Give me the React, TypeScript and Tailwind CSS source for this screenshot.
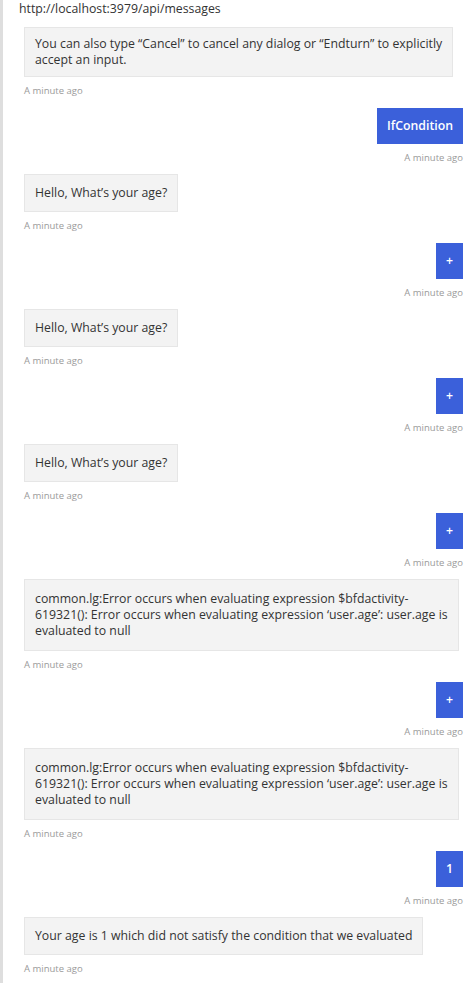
import React from "react";

const font = { fontFamily: '"Open Sans", "Noto Sans", Arial, sans-serif' };

function Ts({ right }: { right?: boolean }) {
  return (
    <div
      className={`mt-[8px] text-[9.5px] leading-[12px] text-[#9a9a9a] ${right ? "text-right" : "text-left"}`}
    >
      A minute ago
    </div>
  );
}

function Bot({ children, pad = "py-[10px]" }: { children: React.ReactNode; pad?: string }) {
  return (
    <div className="flex flex-col items-start">
      <div
        className={`max-w-full border border-[#e6e6e6] bg-[#f3f3f3] px-[10px] text-[12.3px] leading-[16px] text-[#333333] ${pad}`}
      >
        {children}
      </div>
      <Ts />
    </div>
  );
}

function User({ children }: { children: React.ReactNode }) {
  return (
    <div className="flex flex-col items-end">
      <div className="bg-[#3b60da] px-[10px] py-[10px] text-[12.3px] font-semibold leading-[16px] text-white">
        {children}
      </div>
      <Ts right />
    </div>
  );
}

function Line({ children }: { children: React.ReactNode }) {
  return <div className="whitespace-nowrap">{children}</div>;
}

export default function App() {
  const err = (
    <>
      <Line>common.lg:Error occurs when evaluating expression $bfdactivity-</Line>
      <Line>619321(): Error occurs when evaluating expression ‘user.age’: user.age is</Line>
      <Line>evaluated to null</Line>
    </>
  );
  return (
    <div className="flex min-h-[983px] w-[474px] bg-white" style={font}>
      <div className="w-[3px] shrink-0 bg-[#dedede]" />
      <div className="flex flex-1 flex-col">
        <div className="pl-[16px] pt-[1px] text-[12.3px] leading-[16px] text-[#333333]">
          http://localhost:3979/api/messages
        </div>
        <div className="mt-[10px] flex flex-col gap-[10.5px] pl-[21px] pr-[11px]">
          <Bot pad="py-[8px]">
            <Line>You can also type “Cancel” to cancel any dialog or “Endturn” to explicitly</Line>
            <Line>accept an input.</Line>
          </Bot>
          <User>IfCondition</User>
          <Bot>Hello, What’s your age?</Bot>
          <User>+</User>
          <Bot>Hello, What’s your age?</Bot>
          <User>+</User>
          <Bot>Hello, What’s your age?</Bot>
          <User>+</User>
          <Bot pad="py-[11px]">{err}</Bot>
          <User>+</User>
          <Bot pad="py-[11px]">{err}</Bot>
          <User>1</User>
          <Bot>Your age is 1 which did not satisfy the condition that we evaluated</Bot>
        </div>
      </div>
    </div>
  );
}
